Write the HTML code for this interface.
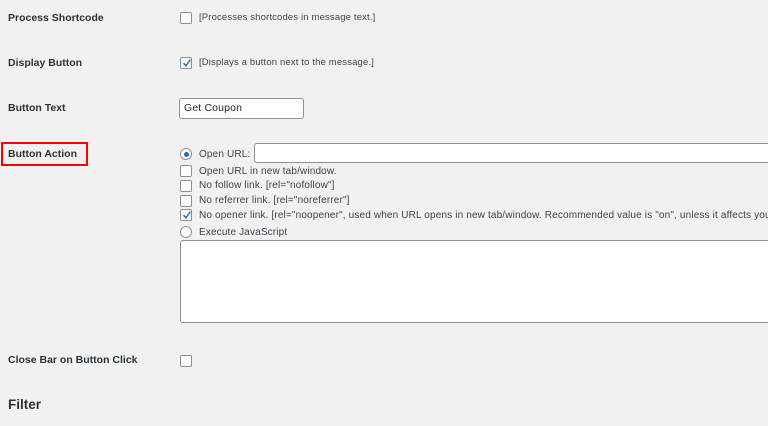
<!DOCTYPE html>
<html><head><meta charset="utf-8"><style>
body{margin:0;width:768px;height:426px;background:#f1f1f1;position:relative;overflow:hidden;font-family:"Liberation Sans",sans-serif;color:#23282d}
.l{position:absolute;left:8px;font-size:10.5px;font-weight:bold;line-height:12px;color:#2c3338}
.t{position:absolute;font-size:10px;line-height:12px;color:#3c434a;letter-spacing:0.15px}
.cb{position:absolute;width:10px;height:10px;border:1px solid #8c8f94;border-radius:2px;background:#fff}
.rd{position:absolute;width:10px;height:10px;border:1px solid #8c8f94;border-radius:50%;background:#fff}
.in{position:absolute;background:#fff;border:1px solid #8c8f94;border-radius:3px;box-sizing:border-box}
svg{position:absolute;left:1px;top:0}
</style></head><body>
<div class="l" style="top:12px">Process Shortcode</div>
<div class="cb" style="left:180px;top:12px"></div>
<div class="t" style="left:199px;top:12px;font-size:9.5px">[Processes shortcodes in message text.]</div>

<div class="l" style="top:57px">Display Button</div>
<div class="cb" style="left:180px;top:57px"><svg width="10" height="10" viewBox="0 0 10 10"><path d="M1.5 5.2 L4 7.8 L8.5 1.5" fill="none" stroke="#2271b1" stroke-width="1.5"/></svg></div>
<div class="t" style="left:199px;top:57px;font-size:9.5px">[Displays a button next to the message.]</div>

<div class="l" style="top:102px">Button Text</div>
<div class="in" style="left:179px;top:98px;width:125px;height:21px"></div>
<div class="t" style="left:184px;top:102px;font-size:10.5px;color:#23282d">Get Coupon</div>

<div style="position:absolute;left:1px;top:142px;width:83px;height:20px;border:2px solid #f00"></div>
<div class="l" style="top:148px">Button Action</div>

<div class="rd" style="left:180px;top:148px"><div style="position:absolute;left:2.5px;top:2.5px;width:5px;height:5px;border-radius:50%;background:#2271b1"></div></div>
<div class="t" style="left:199px;top:149px">Open URL:</div>
<div class="in" style="left:254px;top:143px;width:520px;height:20px"></div>

<div class="cb" style="left:180px;top:165px"></div>
<div class="t" style="left:199px;top:166px">Open URL in new tab/window.</div>
<div class="cb" style="left:180px;top:180px"></div>
<div class="t" style="left:199px;top:180px">No follow link. [rel="nofollow"]</div>
<div class="cb" style="left:180px;top:195px"></div>
<div class="t" style="left:199px;top:195px">No referrer link. [rel="noreferrer"]</div>
<div class="cb" style="left:180px;top:209px"><svg width="10" height="10" viewBox="0 0 10 10"><path d="M1.5 5.2 L4 7.8 L8.5 1.5" fill="none" stroke="#2271b1" stroke-width="1.5"/></svg></div>
<div class="t" style="left:199px;top:210px;white-space:nowrap">No opener link. [rel="noopener", used when URL opens in new tab/window. Recommended value is "on", unless it affects your</div>
<div class="rd" style="left:180px;top:226px"></div>
<div class="t" style="left:199px;top:227px">Execute JavaScript</div>
<div class="in" style="left:180px;top:240px;width:600px;height:83px"></div>

<div class="l" style="top:354px">Close Bar on Button Click</div>
<div class="cb" style="left:180px;top:355px"></div>

<div class="l" style="top:397px;font-size:13.5px;line-height:16px">Filter</div>
</body></html>
